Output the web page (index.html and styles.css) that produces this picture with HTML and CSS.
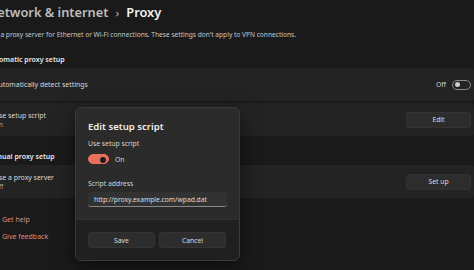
FILE: index.html
```html
<!DOCTYPE html>
<html lang="en">
<head>
  <meta charset="UTF-8" />
  <title>Proxy</title>
  <link rel="stylesheet" href="styles.css">
</head>
<body>
  <div class="page">
    <h1 class="crumb"><span class="parent">Network &amp; internet</span><span class="sep">›</span><span class="here">Proxy</span></h1>
    <p class="desc">Use a proxy server for Ethernet or Wi-Fi connections. These settings don't apply to VPN connections.</p>

    <h2 class="section">Automatic proxy setup</h2>
    <div class="card">
      <div class="label">Automatically detect settings</div>
      <div class="ctrl"><span class="state">Off</span><span class="switch"></span></div>
    </div>
    <div class="card">
      <div class="label">Use setup script<span class="sub">On</span></div>
      <button class="btn">Edit</button>
    </div>

    <h2 class="section">Manual proxy setup</h2>
    <div class="card">
      <div class="label">Use a proxy server<span class="sub">Off</span></div>
      <button class="btn">Set up</button>
    </div>

    <ul class="links">
      <li><span class="ico">?</span>Get help</li>
      <li><span class="ico">✎</span>Give feedback</li>
    </ul>
  </div>

  <div class="dialog">
    <div class="dlg-body">
      <h3>Edit setup script</h3>
      <div class="field">Use setup script</div>
      <div class="toggle-row"><span class="switch on"></span><span>On</span></div>
      <div class="field">Script address</div>
      <div class="input">http://proxy.example.com/wpad.dat</div>
    </div>
    <div class="dlg-foot">
      <button class="btn">Save</button>
      <button class="btn">Cancel</button>
    </div>
  </div>
</body>
</html>
```

FILE: styles.css
```css
body { margin: 0; background: #1a1a1a; color: #e6e6e6; font-family: "Noto Sans", "Open Sans", sans-serif; overflow: hidden; height: 270px; }
.page { margin-left: -13px; padding: 2px 0 0 0; }
.crumb { margin: 0; font-size: 12.8px; font-weight: 600; display: flex; align-items: center; height: 20px; }
.crumb .parent { color: #bdbdbd; }
.crumb .sep { color: #9a9a9a; font-size: 11px; margin: 0 7px; }
.crumb .here { color: #f2f2f2; }
.desc { margin: 8px 0 0; font-size: 6.6px; color: #c8c8c8; }
.section { margin: 16px 0 4px; font-size: 7px; font-weight: 600; color: #e8e8e8; }
.card {
  background: #232323;
  border-radius: 3px;
  height: 33px;
  margin-bottom: 2px;
  padding: 0 3px 0 7px;
  display: flex;
  align-items: center;
  justify-content: space-between;
  font-size: 6.9px;
}
.label { color: #d8d8d8; }
.sub { display: block; font-size: 6.3px; color: #a8a8a8; }
.ctrl { display: flex; align-items: center; gap: 6px; }
.state { color: #d0d0d0; }
.switch {
  width: 19px; height: 10px; border: 1px solid #8a8a8a; border-radius: 6px;
  position: relative; box-sizing: border-box; display: inline-block;
}
.switch::after {
  content: ""; position: absolute; left: 2px; top: 1.5px; width: 5px; height: 5px;
  border-radius: 50%; background: #cfcfcf;
}
.switch.on { background: #e8705c; border-color: #e8705c; width: 21px; height: 10px; }
.switch.on::after { left: auto; right: 2px; top: 1.5px; background: #1b1b1b; width: 6px; height: 6px; }
.btn {
  background: #2d2d2d; color: #dcdcdc; border: 1px solid #333; border-radius: 3px;
  width: 65px; height: 16px; font-family: inherit; font-size: 6.8px; padding: 0;
}
.links { list-style: none; margin: 13px 0 0; padding: 0; font-size: 7px; color: #d8907e; }
.links li { height: 17px; display: flex; align-items: center; }
.ico { width: 15px; color: #d8907e; font-size: 7px; }
.dialog {
  position: absolute; left: 75px; top: 107px; width: 165px; height: 154px;
  background: #2b2b2b; border: 1px solid #3a3a3a; border-radius: 6px;
  box-sizing: border-box; box-shadow: 0 6px 20px rgba(0,0,0,0.5);
  display: flex; flex-direction: column; overflow: hidden;
}
.dlg-body { padding: 12px 12px 0; flex: 1; }
.dlg-body h3 { margin: 0; font-size: 9.6px; font-weight: 600; color: #f0f0f0; }
.field { font-size: 6.8px; color: #d6d6d6; margin-top: 6px; }
.toggle-row { display: flex; align-items: center; gap: 6px; font-size: 6.8px; color: #d6d6d6; margin-top: 6px; }
.toggle-row + .field { margin-top: 15px; }
.input {
  margin-top: 4px; height: 15px; background: #323232; border-bottom: 1px solid #8a8a8a;
  border-radius: 3px; font-size: 6.7px; color: #dedede; padding-left: 6px;
  display: flex; align-items: center; box-sizing: border-box; width: 139px;
}
.dlg-foot {
  height: 41px; background: #202020; border-top: 1px solid #303030;
  display: flex; align-items: center; gap: 4px; padding: 0 12px; box-sizing: border-box;
}
.dlg-foot .btn { width: 67px; }
```
